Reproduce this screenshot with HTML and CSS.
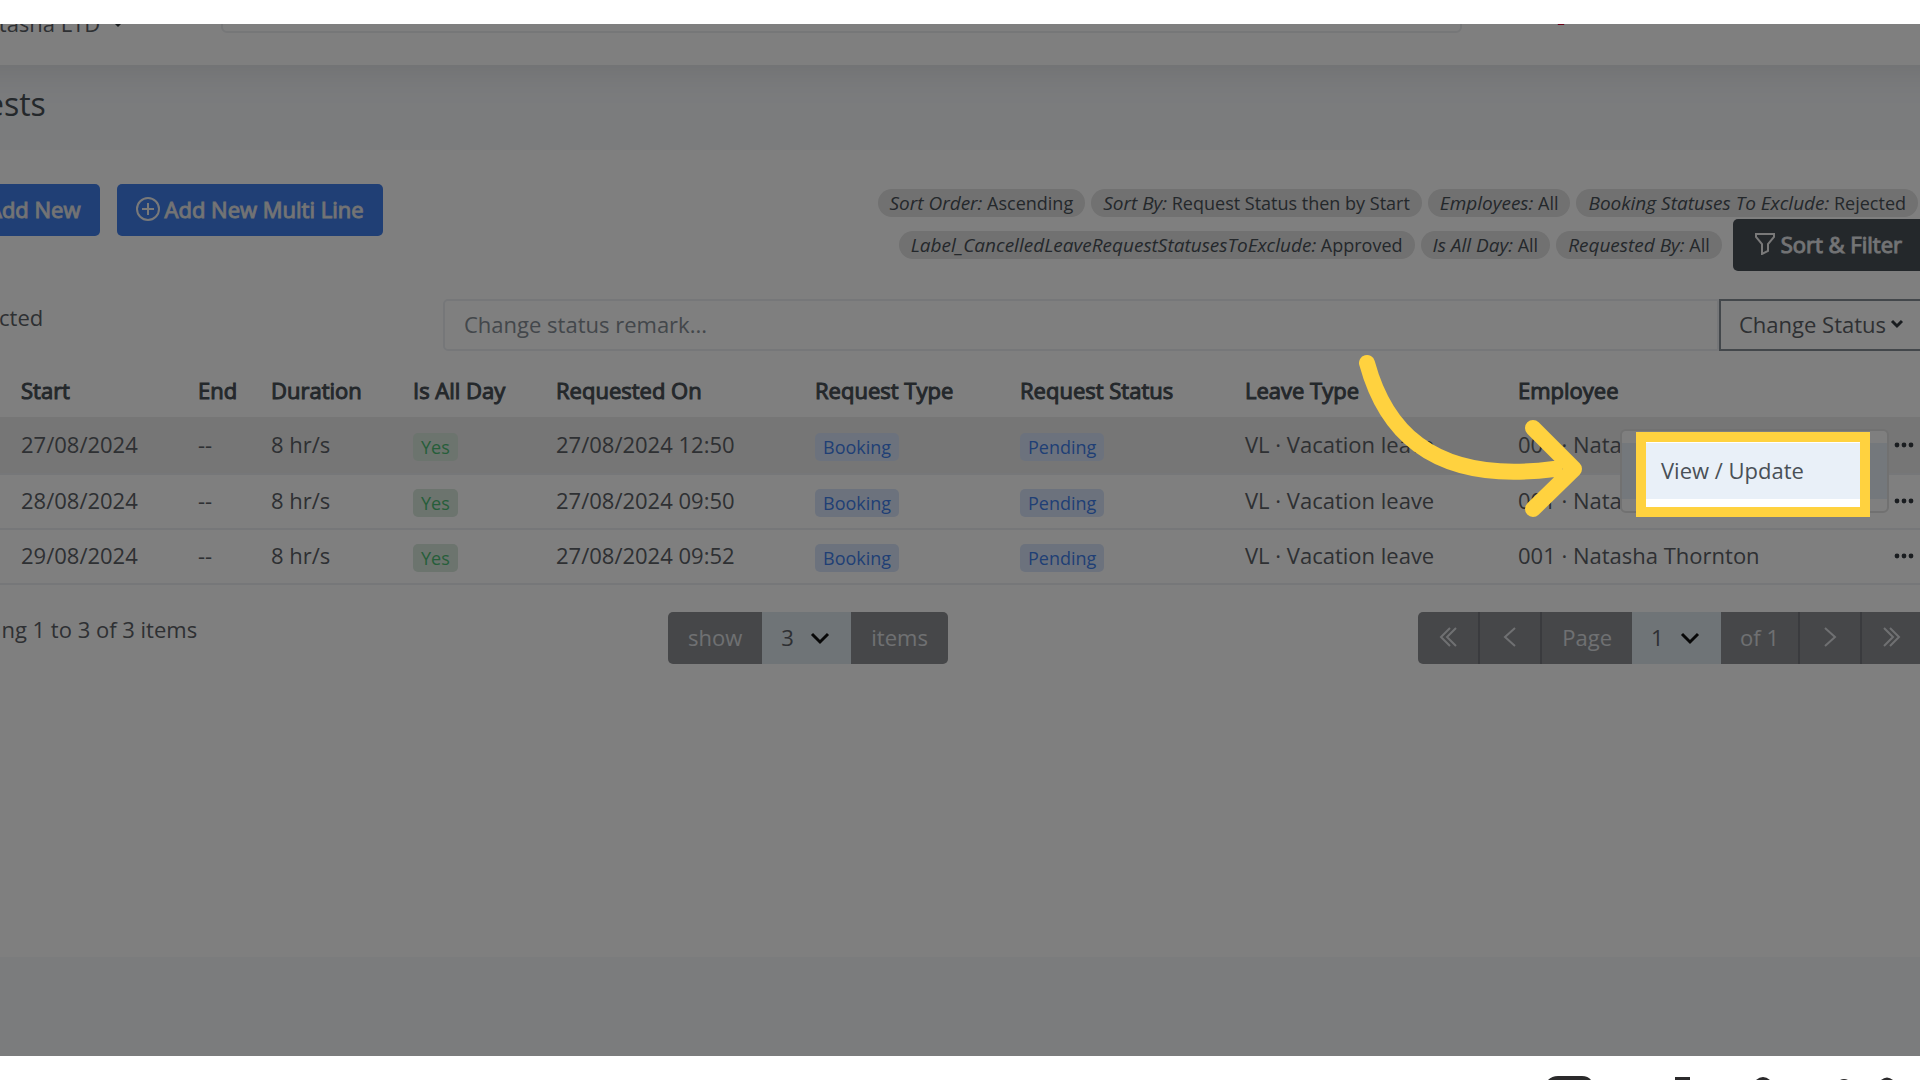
FILE: index.html
```html
<!DOCTYPE html>
<html lang="en">
<head>
<meta charset="utf-8">
<title>Requests</title>
<link rel="stylesheet" href="styles.css">
</head>
<body>
<main class="stage">
  <div class="app">
    <header class="topbar">
      <button class="company" type="button">Natasha LTD <svg width="12" height="9" viewBox="0 0 12 9"><path d="M1 1h10v2L6 8 1 3z" fill="#343a40"/></svg></button>
      <input class="search" type="text" aria-label="Search">
      <svg class="flag" width="18" height="18" viewBox="0 0 18 18"><circle cx="9" cy="9" r="9" fill="#3b4f94"/><path d="M6 0h6v18H6z" fill="#d8002c"/></svg>
    </header>
    <h1 class="title">Requests</h1>
    <section class="card">
      <div class="toolbar">
        <button class="btn primary" type="button"><svg class="plus" viewBox="0 0 24 24"><circle cx="12" cy="12" r="11"/><path d="M12 6v12M6 12h12"/></svg>Add New</button>
        <button class="btn primary" type="button"><svg class="plus" viewBox="0 0 24 24"><circle cx="12" cy="12" r="11"/><path d="M12 6v12M6 12h12"/></svg>Add New Multi Line</button>
        <div class="filters">
          <span class="pill"><i>Sort Order:</i> Ascending</span>
          <span class="pill"><i>Sort By:</i> Request Status then by Start</span>
          <span class="pill"><i>Employees:</i> All</span>
          <span class="pill"><i>Booking Statuses To Exclude:</i> Rejected</span>
          <span class="pill"><i>Label_CancelledLeaveRequestStatusesToExclude:</i> Approved</span>
          <span class="pill"><i>Is All Day:</i> All</span>
          <span class="pill"><i>Requested By:</i> All</span>
          <button class="btn dark" type="button"><svg class="funnel" viewBox="0 0 20 22"><path d="M1 1h18v3l-6 7v7l-6 3V11L1 4z"/></svg>Sort &amp; Filter</button>
        </div>
      </div>
      <div class="bulk">
        <span class="selected">0 selected</span>
        <input class="remark" type="text" placeholder="Change status remark..." aria-label="Change status remark">
        <button class="status" type="button">Change Status<svg width="14" height="10" viewBox="0 0 14 10"><path d="M2 2l5 5 5-5" fill="none" stroke="#343a40" stroke-width="3"/></svg></button>
      </div>
      <table class="grid">
        <colgroup><col class="c-check"><col class="c-start"><col class="c-end"><col class="c-duration"><col class="c-allday"><col class="c-on"><col class="c-type"><col class="c-status"><col class="c-leave"><col class="c-employee"><col></colgroup>
        <thead><tr><th></th><th>Start</th><th>End</th><th>Duration</th><th>Is All Day</th><th>Requested On</th><th>Request Type</th><th>Request Status</th><th>Leave Type</th><th>Employee</th><th></th></tr></thead>
        <tbody>
          <tr class="active"><td></td><td>27/08/2024</td><td>--</td><td>8 hr/s</td><td><span class="badge yes">Yes</span></td><td>27/08/2024 12:50</td><td><span class="badge info">Booking</span></td><td><span class="badge info">Pending</span></td><td>VL · Vacation leave</td><td>001 · Natasha Thornton</td><td><button class="more" type="button" aria-label="Actions"><svg viewBox="0 0 20 6"><circle cx="3" cy="3" r="2.4"/><circle cx="10" cy="3" r="2.4"/><circle cx="17" cy="3" r="2.4"/></svg></button></td></tr>
          <tr><td></td><td>28/08/2024</td><td>--</td><td>8 hr/s</td><td><span class="badge yes">Yes</span></td><td>27/08/2024 09:50</td><td><span class="badge info">Booking</span></td><td><span class="badge info">Pending</span></td><td>VL · Vacation leave</td><td>001 · Natasha Thornton</td><td><button class="more" type="button" aria-label="Actions"><svg viewBox="0 0 20 6"><circle cx="3" cy="3" r="2.4"/><circle cx="10" cy="3" r="2.4"/><circle cx="17" cy="3" r="2.4"/></svg></button></td></tr>
          <tr><td></td><td>29/08/2024</td><td>--</td><td>8 hr/s</td><td><span class="badge yes">Yes</span></td><td>27/08/2024 09:52</td><td><span class="badge info">Booking</span></td><td><span class="badge info">Pending</span></td><td>VL · Vacation leave</td><td>001 · Natasha Thornton</td><td><button class="more" type="button" aria-label="Actions"><svg viewBox="0 0 20 6"><circle cx="3" cy="3" r="2.4"/><circle cx="10" cy="3" r="2.4"/><circle cx="17" cy="3" r="2.4"/></svg></button></td></tr>
        </tbody>
      </table>
      <div class="pager">
        <span class="showing">Showing 1 to 3 of 3 items</span>
        <div class="group">
          <label class="cell" for="size">show</label>
          <span class="pick"><select id="size"><option>3</option></select><svg class="down" viewBox="0 0 20 14"><path d="M2 3l8 8 8-8"/></svg></span>
          <span class="cell">items</span>
        </div>
        <div class="group pages">
          <button class="cell nav" type="button" aria-label="First page"><svg viewBox="0 0 18 20"><path d="M11 1L2 10l9 9M17 1l-9 9 9 9"/></svg></button>
          <button class="cell nav" type="button" aria-label="Previous page"><svg viewBox="0 0 18 20"><path d="M14 1L4 10l10 9"/></svg></button>
          <label class="cell" for="page">Page</label>
          <span class="pick"><select id="page"><option>1</option></select><svg class="down" viewBox="0 0 20 14"><path d="M2 3l8 8 8-8"/></svg></span>
          <span class="cell last">of 1</span>
          <button class="cell nav" type="button" aria-label="Next page"><svg viewBox="0 0 18 20"><path d="M4 1l10 9-10 9"/></svg></button>
          <button class="cell nav" type="button" aria-label="Last page"><svg viewBox="0 0 18 20"><path d="M1 1l9 9-9 9M7 1l9 9-9 9"/></svg></button>
        </div>
      </div>
    </section>
  </div>
  <div class="menu"><button type="button">View / Update</button></div>
  <div class="spotlight"></div>
  <svg class="arrow" viewBox="0 0 240 180"><path d="M17 19C33 78 75 142 204 125M183 84l41 41-41 40" /></svg>
</main>
<footer class="brand">
  <svg width="380" height="4" viewBox="0 0 380 4" fill="#2b2a2b"><path d="M8 4q4-4 10-4h24q6 0 9 4zM135 1h15v3h-15zM216 4q7-6 14 0zM300 4q4-2 8 0zM341 4q6-5 12 0z"/></svg>
</footer>
</body>
</html>
```
FILE: styles.css
```css
* { box-sizing: border-box; }
html, body { height: 100%; }
body {
  margin: 0;
  display: flex;
  flex-direction: column;
  padding-top: 24px;
  overflow: hidden;
  background: #fff;
  color: #5c6166;
  font: 22px/30px "Open Sans", sans-serif;
}
button, input, select { font: inherit; color: inherit; }
button { border: 0; background: none; padding: 0; cursor: pointer; white-space: nowrap; }

/* Window onto the application; content runs past both sides */
.stage { position: relative; flex: 1; overflow: hidden; background: #f6f8fb; }
.app { margin: 0 -40px 0 -91px; }

.topbar {
  display: flex;
  align-items: flex-end;
  height: 96px;
  margin-top: -55px;
  padding: 0 0 27px 61px;
  background: #fff;
  box-shadow: 0 2px 40px rgba(0, 0, 0, .12);
}
.company { display: flex; align-items: center; gap: 12px; width: 251px; }
.search {
  flex: 0 1 1241px;
  height: 40px;
  margin-bottom: 5px;
  border: 2px solid #eceef1;
  border-radius: 6px;
}
.flag { margin: 0 0 13px 90px; }

.title {
  margin: 0;
  padding: 18px 0 25px;
  color: #495057;
  font-size: 32px;
  line-height: 42px;
  font-weight: 400;
}

.card { height: 807px; padding: 34px 36px 0 31px; background: #fff; }

.toolbar { display: flex; align-items: flex-start; gap: 17px; }
.btn {
  display: flex;
  align-items: center;
  gap: 5px;
  height: 52px;
  padding: 0 19px 2px;
  border-radius: 5px;
  color: #f2f2f2;
  -webkit-text-stroke: 1px #e0e2e6;
}
.primary { background: #407eea; }
.dark { gap: 6px; margin-left: 5px; padding: 0 22px 2px; background: #495057; }
.plus { width: 24px; height: 24px; fill: none; stroke: #f2f2f2; stroke-width: 2; }
.funnel { width: 20px; height: 22px; fill: none; stroke: #f2f2f2; stroke-width: 2; }
.filters {
  display: flex;
  flex-wrap: wrap;
  justify-content: flex-end;
  align-items: center;
  row-gap: 2px;
  width: 1070px;
  margin-left: auto;
  padding-top: 5px;
}
.pill {
  margin-right: 6px;
  padding: 0 12px;
  border-radius: 15px;
  background: #e2e2e2;
  color: #495057;
  font-size: 18px;
  line-height: 28px;
  white-space: nowrap;
}
.pill i { font-size: 19px; }

.bulk { display: flex; align-items: flex-start; margin-top: 28px; }
.selected { width: 503px; padding-top: 3px; }
.remark {
  flex: 1;
  height: 52px;
  padding: 0 19px 2px;
  border: 2px solid #eceff3;
  border-radius: 5px 0 0 5px;
  background: #fff;
}
.remark::placeholder { color: #868e96; opacity: 1; }
.status {
  display: flex;
  align-items: center;
  gap: 4px;
  width: 205px;
  height: 52px;
  padding: 0 18px 2px;
  border: 2px solid #868e96;
}

.grid { width: 100%; table-layout: fixed; border-collapse: collapse; margin-top: 11px; }
.grid th, .grid td { padding: 0; text-align: left; white-space: nowrap; }
.grid th { height: 55px; color: #495057; font-weight: 400; -webkit-text-stroke: 1px #495057; }
.grid td { height: 55px; padding-top: 10px; border-bottom: 2px solid #eceff2; vertical-align: top; }
.grid .active td { height: 57px; padding-top: 12px; background: #ececec; }
.c-check { width: 81px; }
.c-start { width: 177px; }
.c-end { width: 73px; }
.c-duration { width: 142px; }
.c-allday { width: 143px; }
.c-on { width: 259px; }
.c-type { width: 205px; }
.c-status { width: 225px; }
.c-leave { width: 273px; }
.c-employee { width: 376px; }
.badge { display: inline-block; margin-top: 4px; padding: 0 8px; border-radius: 5px; font-size: 18px; line-height: 28px; vertical-align: top; }
.yes { background: #d8e8dc; color: #4dbd74; }
.info { background: #d9e5fb; color: #407eea; }
.more { display: block; padding-top: 13px; }
.more svg { display: block; width: 20px; height: 6px; fill: #343a40; }

.pager { display: flex; justify-content: space-between; align-items: flex-start; padding-top: 27px; }
.showing { width: 728px; padding-top: 2px; }
.group { display: flex; height: 52px; border-radius: 5px; overflow: hidden; background: #8c8e92; color: #dfe1e4; }
.pages { margin-left: auto; }
.cell { display: flex; align-items: center; justify-content: center; padding: 0 20px 2px; white-space: nowrap; }
.nav { width: 62px; border-right: 2px solid #74777c; }
.last { width: 79px; border-right: 2px solid #74777c; }
.nav svg { width: 18px; height: 20px; fill: none; stroke: #dfe1e4; stroke-width: 2; flex: none; }
.pick { position: relative; display: flex; width: 89px; }
.pick select {
  width: 100%;
  padding: 0 19px 2px;
  border: 0;
  appearance: none;
  background: #dfe8ee;
  color: #5c6166;
}
.down {
  position: absolute;
  right: 21px;
  top: 19px;
  width: 20px;
  height: 14px;
  fill: none;
  stroke: #111;
  stroke-width: 3;
  pointer-events: none;
}

/* Row action menu, with the guide's spotlight and arrow above it */
.menu {
  position: absolute;
  right: 31px;
  top: 405px;
  width: 269px;
  padding: 12px 0;
  border: 2px solid #e2e2e2;
  border-radius: 6px;
  background: #fff;
}
.menu button { display: block; width: 100%; height: 56px; padding: 0 39px 2px; background: #e9f0f8; text-align: left; color: #495057; }
.spotlight {
  position: absolute;
  right: 50px;
  top: 408px;
  width: 234px;
  height: 85px;
  border: 10px solid #ffd23f;
  box-shadow: 0 0 0 3000px rgba(0, 0, 0, .5);
}
.arrow {
  position: absolute;
  right: 330px;
  top: 320px;
  width: 240px;
  height: 180px;
  fill: none;
  stroke: #ffd23f;
  stroke-width: 16;
  stroke-linecap: round;
  stroke-linejoin: round;
}

.brand { display: flex; justify-content: flex-end; align-items: flex-end; height: 24px; }
.brand svg { display: block; }
```
